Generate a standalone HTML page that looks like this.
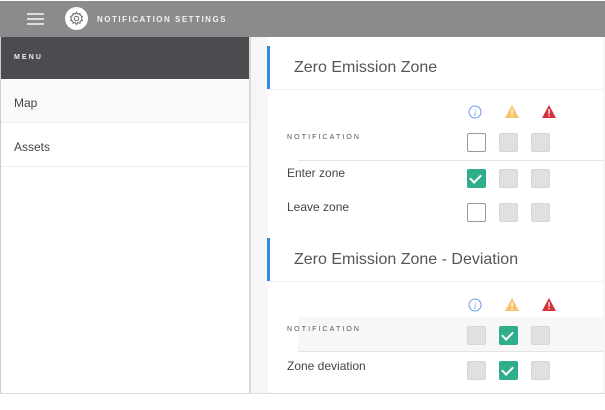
<!DOCTYPE html><html><head><style>
*{margin:0;padding:0;box-sizing:border-box}
body{width:605px;height:410px;background:#fff;font-family:"Liberation Sans",sans-serif;position:relative;overflow:hidden}
.a{position:absolute}
.cb{position:absolute;width:19px;height:19px;border-radius:2px}
.e{border:1.5px solid #999;background:#fff}
.d{background:#e0e0e0;border:1px solid #d6d6d6}
.c{background:#2fae8c}
.c:after{content:"";position:absolute;left:5px;top:3px;width:5px;height:9px;border:solid #fff;border-width:0 2px 2px 0;transform:rotate(45deg)}
.t{font-size:16px;color:#555}
.l{font-size:12px;color:#444}
.n{font-size:7px;letter-spacing:2.1px;color:#555}
</style></head><body>
<div class="a" style="left:0;top:1px;width:605px;height:36px;background:#8b8b8d"></div>
<div class="a" style="left:27px;top:13px;width:17px;height:2px;background:#ddd;box-shadow:0 5px 0 #ddd,0 10px 0 #ddd"></div>
<div class="a" style="left:65px;top:7px;width:23px;height:23px;border-radius:50%;background:#fff"></div>
<svg class="a" style="left:69px;top:11px" width="15" height="15" viewBox="0 0 24 24" fill="none" stroke="#666" stroke-width="1.6"><circle cx="12" cy="12" r="3.5"/><path d="M12 2l2 3 3.5-1 .5 3.5 3.5 1-1.5 3.5 1.5 3-3.5 1-.5 3.5-3.5-1-2 3-2-3-3.5 1-.5-3.5-3.5-1 1.5-3-1.5-3.5 3.5-1 .5-3.5 3.5 1z"/></svg>
<div class="a" style="left:97px;top:15px;font-size:8px;font-weight:bold;letter-spacing:1.5px;color:#f2f2f2">NOTIFICATION SETTINGS</div>
<div class="a" style="left:0;top:37px;width:249px;height:42px;background:#4b4c50"></div>
<div class="a n" style="left:14px;top:54px;color:#eee;font-weight:bold">MENU</div>
<div class="a" style="left:0;top:79px;width:249px;height:44px;background:#fafafa;border-bottom:1px solid #eee"></div>
<div class="a l" style="left:14px;top:96px">Map</div>
<div class="a" style="left:0;top:124px;width:249px;height:43px;border-bottom:1px solid #eee"></div>
<div class="a l" style="left:14px;top:140px">Assets</div>
<div class="a" style="left:0;top:37px;width:1px;height:356px;background:#ccc"></div>
<div class="a" style="left:249px;top:37px;width:2px;height:356px;background:#d8d8d8"></div>
<div class="a" style="left:251px;top:37px;width:17px;height:356px;background:#f6f6f6"></div>
<div class="a" style="left:603px;top:37px;width:2px;height:356px;background:#f6f6f6"></div>
<div class="a" style="left:0;top:393px;width:605px;height:1px;background:#ddd"></div>
<!-- section 1 -->
<div class="a" style="left:267px;top:46px;width:3px;height:43px;background:#3a87e0"></div>
<div class="a" style="left:270px;top:89px;width:333px;height:1px;background:#f0f0f0"></div>
<div class="a t" style="left:294px;top:59px">Zero Emission Zone</div>
<svg class="a" style="left:468px;top:105px" width="14" height="14"><circle cx="7" cy="7" r="6" fill="none" stroke="#6d9be8"/><text x="7" y="11" font-size="9" fill="#6d9be8" text-anchor="middle" font-style="italic" font-family="Liberation Serif">i</text></svg>
<svg class="a" style="left:505px;top:105px" width="14" height="13"><path d="M7 0L14 13H0z" fill="#f7c46b"/><rect x="6.4" y="4" width="1.3" height="5" fill="#fff"/><rect x="6.4" y="10" width="1.3" height="1.3" fill="#fff"/></svg>
<svg class="a" style="left:542px;top:105px" width="14" height="13"><path d="M7 0L14 13H0z" fill="#d8303c"/><rect x="6.4" y="4" width="1.3" height="5" fill="#fff"/><rect x="6.4" y="10" width="1.3" height="1.3" fill="#fff"/></svg>
<div class="a n" style="left:287px;top:134px">NOTIFICATION</div>
<div class="cb e" style="left:467px;top:133px"></div><div class="cb d" style="left:499px;top:133px"></div><div class="cb d" style="left:531px;top:133px"></div>
<div class="a" style="left:298px;top:160px;width:305px;height:1px;background:#e4e4e4"></div>
<div class="a l" style="left:287px;top:166px">Enter zone</div>
<div class="cb c" style="left:467px;top:169px"></div><div class="cb d" style="left:499px;top:169px"></div><div class="cb d" style="left:531px;top:169px"></div>
<div class="a l" style="left:287px;top:200px">Leave zone</div>
<div class="cb e" style="left:467px;top:203px"></div><div class="cb d" style="left:499px;top:203px"></div><div class="cb d" style="left:531px;top:203px"></div>
<!-- section 2 -->
<div class="a" style="left:267px;top:238px;width:3px;height:43px;background:#3a87e0"></div>
<div class="a" style="left:270px;top:281px;width:333px;height:1px;background:#f0f0f0"></div>
<div class="a t" style="left:294px;top:251px">Zero Emission Zone - Deviation</div>
<svg class="a" style="left:468px;top:298px" width="14" height="14"><circle cx="7" cy="7" r="6" fill="none" stroke="#6d9be8"/><text x="7" y="11" font-size="9" fill="#6d9be8" text-anchor="middle" font-style="italic" font-family="Liberation Serif">i</text></svg>
<svg class="a" style="left:505px;top:298px" width="14" height="13"><path d="M7 0L14 13H0z" fill="#f7c46b"/><rect x="6.4" y="4" width="1.3" height="5" fill="#fff"/><rect x="6.4" y="10" width="1.3" height="1.3" fill="#fff"/></svg>
<svg class="a" style="left:542px;top:298px" width="14" height="13"><path d="M7 0L14 13H0z" fill="#d8303c"/><rect x="6.4" y="4" width="1.3" height="5" fill="#fff"/><rect x="6.4" y="10" width="1.3" height="1.3" fill="#fff"/></svg>
<div class="a" style="left:298px;top:317px;width:305px;height:35px;background:#f7f7f7;border-bottom:1px solid #e4e4e4"></div>
<div class="a n" style="left:287px;top:326px">NOTIFICATION</div>
<div class="cb d" style="left:467px;top:326px"></div><div class="cb c" style="left:499px;top:326px"></div><div class="cb d" style="left:531px;top:326px"></div>
<div class="a l" style="left:287px;top:359px">Zone deviation</div>
<div class="cb d" style="left:467px;top:361px"></div><div class="cb c" style="left:499px;top:361px"></div><div class="cb d" style="left:531px;top:361px"></div>
</body></html>
